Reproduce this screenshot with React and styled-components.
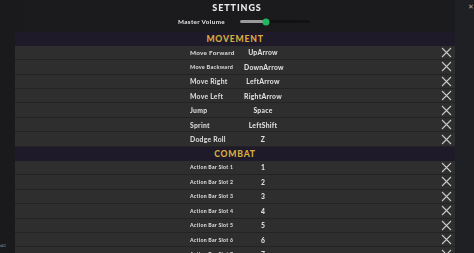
import React from "react";
import styled, { createGlobalStyle } from "styled-components";

const GlobalStyle = createGlobalStyle`
  html, body {
    margin: 0;
    padding: 0;
    background: #1b1b1d;
  }
  body {
    font-family: Lato, "Open Sans", sans-serif;
    -webkit-font-smoothing: antialiased;
  }
`;

const Screen = styled.div`
  position: relative;
  width: 474px;
  height: 253px;
  overflow: hidden;
  background: linear-gradient(90deg, #1a1a1c 0, #1b1b1e 455px, #1e2024 455px);
  display: flex;
  flex-direction: column;
  align-items: center;
  & > * {
    flex-shrink: 0;
  }
`;

const Title = styled.h1`
  margin: 2px 0 0;
  height: 12px;
  line-height: 12px;
  font-size: 9px;
  font-weight: 900;
  letter-spacing: 0.9px;
  color: #ececec;
  filter: grayscale(1);
`;

const VolumeRow = styled.div`
  display: flex;
  align-items: center;
  gap: 15px;
  height: 11px;
  margin: 2px 0 0 14px;
`;

const VolumeLabel = styled.span`
  font-size: 6.3px;
  font-weight: 900;
  color: #d8d8d8;
  letter-spacing: 0.35px;
  filter: grayscale(1);
`;

const Track = styled.div`
  position: relative;
  width: 70px;
  height: 3px;
  border-radius: 2px;
  background: #121212;
`;

const Fill = styled.div`
  height: 100%;
  border-radius: 2px;
  background: #9a9a9a;
`;

const Thumb = styled.div`
  position: absolute;
  top: 50%;
  width: 7px;
  height: 7px;
  border-radius: 50%;
  background: #21b65f;
  transform: translate(-50%, -50%);
`;

const Panel = styled.div`
  align-self: stretch;
  margin: 4.7px 19px 0 15px;
  display: flex;
  flex-direction: column;
`;

const SectionHeader = styled.div`
  height: 14px;
  line-height: 14px;
  text-align: center;
  background: #1e1a29;
  color: #d9ac40;
  font-size: 8.6px;
  font-weight: 900;
  letter-spacing: 0.8px;
`;

const Row = styled.div`
  display: flex;
  align-items: center;
  height: 13.45px;
  padding-left: 175px;
  background: #2e2e2e;
  border-bottom: 1px solid #232323;
`;

const Action = styled.span`
  width: 54px;
  font-size: ${(p) => p.size}px;
  font-weight: 900;
  color: #d6d6d6;
  white-space: nowrap;
  letter-spacing: 0.25px;
  filter: grayscale(1);
`;

const Key = styled.span`
  width: 38px;
  text-align: center;
  font-size: 6.8px;
  font-weight: 900;
  color: #dedede;
  letter-spacing: 0.25px;
  filter: grayscale(1);
`;

const CloseButton = styled.button`
  margin-left: auto;
  margin-right: 3px;
  width: 11px;
  height: 11px;
  padding: 0;
  border: 0;
  background: none;
  display: flex;
  svg {
    width: 11px;
    height: 11px;
  }
`;

const Corner = styled.span`
  position: absolute;
  right: 0;
  top: 2px;
  font-size: 7px;
  color: #aaa;
`;

const Version = styled.span`
  position: absolute;
  left: 0;
  bottom: 5px;
  font-size: 3px;
  color: #bbb;
`;

const movement = [
  ["Move Forward", "UpArrow", 6.4],
  ["Move Backward", "DownArrow", 5.5],
  ["Move Right", "LeftArrow", 6.8],
  ["Move Left", "RightArrow", 6.8],
  ["Jump", "Space", 6.8],
  ["Sprint", "LeftShift", 6.8],
  ["Dodge Roll", "Z", 6.8],
];

const combat = [1, 2, 3, 4, 5, 6, 7].map((n) => [`Action Bar Slot ${n}`, `${n}`, 5.2]);

const Cross = () => (
  <svg viewBox="0 0 11 11">
    <path d="M1 1 L10 10 M10 1 L1 10" stroke="#c8c8c8" strokeWidth="1.1" fill="none" />
  </svg>
);

const Binding = ({ action, keyName, size }) => (
  <Row>
    <Action size={size}>{action}</Action>
    <Key>{keyName}</Key>
    <CloseButton>
      <Cross />
    </CloseButton>
  </Row>
);

export default function App() {
  const volume = 0.37;
  return (
    <>
      <GlobalStyle />
      <Screen>
        <Title>SETTINGS</Title>
        <VolumeRow>
          <VolumeLabel>Master Volume</VolumeLabel>
          <Track>
            <Fill style={{ width: `${volume * 100}%` }} />
            <Thumb style={{ left: `${volume * 100}%` }} />
          </Track>
        </VolumeRow>
        <Panel>
          <SectionHeader>MOVEMENT</SectionHeader>
          {movement.map(([a, k, s]) => (
            <Binding key={a} action={a} keyName={k} size={s} />
          ))}
          <SectionHeader>COMBAT</SectionHeader>
          {combat.map(([a, k, s]) => (
            <Binding key={a} action={a} keyName={k} size={s} />
          ))}
        </Panel>
        <Corner>✕</Corner>
        <Version>v0.1</Version>
      </Screen>
    </>
  );
}
